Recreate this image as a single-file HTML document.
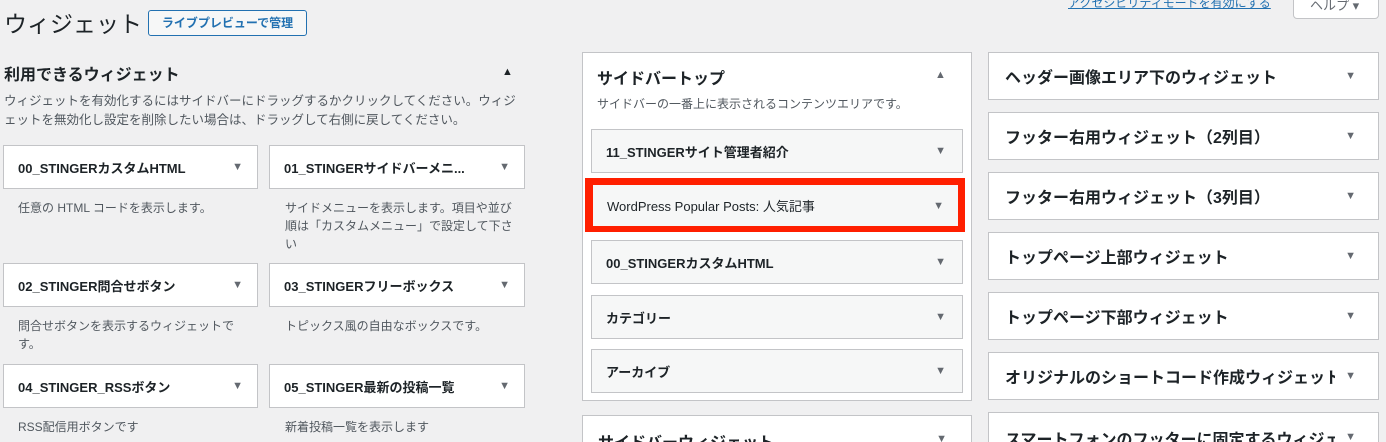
<!DOCTYPE html>
<html style="width:1386px;height:442px;overflow:hidden"><head><meta charset="utf-8"><style>
*{box-sizing:border-box;margin:0;padding:0}
body{width:1386px;height:442px;overflow:hidden;background:#f0f0f1;font-family:"Liberation Sans","Noto Sans CJK JP",sans-serif;color:#1d2327;position:relative}
.a{position:absolute}
.w{position:absolute;background:#fff;border:1px solid #c3c4c7;font-weight:bold;font-size:13px;padding:0 0 0 14px;display:flex;align-items:center;white-space:nowrap;overflow:hidden}
.w .t{position:absolute;right:14px;top:50%;transform:translateY(-50%);font-size:11px;color:#646970}
.d{position:absolute;font-size:12px;color:#50575e;line-height:18px}
.s{position:absolute;background:#f6f7f7;border:1px solid #c3c4c7;font-size:13px;font-weight:bold;padding-left:14px;display:flex;align-items:center;white-space:nowrap}
.s .t{position:absolute;right:16px;top:50%;transform:translateY(-50%);font-size:11px;color:#646970}
.r{position:absolute;left:988px;width:391px;height:48px;background:#fff;border:1px solid #c3c4c7;font-size:16px;font-weight:bold;padding-left:16px;display:flex;align-items:center;white-space:nowrap;overflow:hidden}
.r span.n{display:block;width:330px;overflow:hidden}
.r .t{position:absolute;right:22px;top:50%;transform:translateY(-50%);font-size:11px;color:#646970;background:#fff;padding-left:4px}
</style></head><body>
<div class="a" style="left:4px;top:5px;font-size:23px;color:#1d2327">ウィジェット</div>
<div class="a" style="left:148px;top:10px;width:159px;height:26px;border:1px solid #2271b1;border-radius:3px;color:#2271b1;font-size:12px;font-weight:bold;text-align:center;line-height:24px;background:#f6f7f7">ライブプレビューで管理</div>
<div class="a" style="left:1068px;top:-6px;font-size:12px;color:#2271b1;text-decoration:underline">アクセシビリティモードを有効にする</div>
<div class="a" style="left:1293px;top:-8px;width:86px;height:27px;background:#fff;border:1px solid #c3c4c7;border-radius:0 0 4px 4px;font-size:13px;color:#646970;padding-left:16px;line-height:26px">ヘルプ ▾</div>

<div class="a" style="left:4px;top:61px;font-size:16px;font-weight:bold">利用できるウィジェット</div>
<div class="a" style="left:502px;top:66px;font-size:11px">▲</div>
<div class="d" style="left:4px;top:92px;width:520px;line-height:19px;font-size:12.5px">ウィジェットを有効化するにはサイドバーにドラッグするかクリックしてください。ウィジェットを無効化し設定を削除したい場合は、ドラッグして右側に戻してください。</div>

<div class="w" style="left:3px;top:145px;width:255px;height:44px">00_STINGERカスタムHTML<span class="t">▼</span></div>
<div class="w" style="left:269px;top:145px;width:256px;height:44px">01_STINGERサイドバーメニ...<span class="t">▼</span></div>
<div class="d" style="left:18px;top:199px">任意の HTML コードを表示します。</div>
<div class="d" style="left:285px;top:199px;width:230px">サイドメニューを表示します。項目や並び順は「カスタムメニュー」で設定して下さい</div>

<div class="w" style="left:3px;top:263px;width:255px;height:44px">02_STINGER問合せボタン<span class="t">▼</span></div>
<div class="w" style="left:269px;top:263px;width:256px;height:44px">03_STINGERフリーボックス<span class="t">▼</span></div>
<div class="d" style="left:18px;top:317px;width:225px">問合せボタンを表示するウィジェットです。</div>
<div class="d" style="left:285px;top:317px">トピックス風の自由なボックスです。</div>

<div class="w" style="left:3px;top:364px;width:255px;height:44px">04_STINGER_RSSボタン<span class="t">▼</span></div>
<div class="w" style="left:269px;top:364px;width:256px;height:44px">05_STINGER最新の投稿一覧<span class="t">▼</span></div>
<div class="d" style="left:18px;top:418px">RSS配信用ボタンです</div>
<div class="d" style="left:285px;top:418px">新着投稿一覧を表示します</div>

<div class="a" style="left:582px;top:52px;width:390px;height:349px;background:#fff;border:1px solid #c3c4c7"></div>
<div class="a" style="left:597px;top:65px;font-size:16px;font-weight:bold">サイドバートップ</div>
<div class="a" style="left:935px;top:69px;font-size:11px;color:#646970">▲</div>
<div class="d" style="left:597px;top:95px">サイドバーの一番上に表示されるコンテンツエリアです。</div>
<div class="s" style="left:591px;top:129px;width:372px;height:44px">11_STINGERサイト管理者紹介<span class="t">▼</span></div>
<div class="a" style="left:585px;top:178px;width:380px;height:54px;background:#ff1f00"></div>
<div class="s" style="left:593px;top:185px;width:365px;height:41px;border:none;font-weight:normal;font-size:13px;color:#1d2327">WordPress Popular Posts: 人気記事<span class="t" style="right:14px">▼</span></div>
<div class="s" style="left:591px;top:240px;width:372px;height:44px">00_STINGERカスタムHTML<span class="t">▼</span></div>
<div class="s" style="left:591px;top:295px;width:372px;height:44px">カテゴリー<span class="t">▼</span></div>
<div class="s" style="left:591px;top:349px;width:372px;height:44px">アーカイブ<span class="t">▼</span></div>
<div class="a" style="left:582px;top:415px;width:390px;height:40px;background:#fff;border:1px solid #c3c4c7;font-size:16px;font-weight:bold;padding:13px 0 0 15px">サイドバーウィジェット<span style="position:absolute;right:24px;top:17px;font-size:11px;color:#646970">▼</span></div>

<div class="r" style="top:52px"><span class="n">ヘッダー画像エリア下のウィジェット</span><span class="t">▼</span></div>
<div class="r" style="top:112px"><span class="n">フッター右用ウィジェット（2列目）</span><span class="t">▼</span></div>
<div class="r" style="top:172px"><span class="n">フッター右用ウィジェット（3列目）</span><span class="t">▼</span></div>
<div class="r" style="top:232px"><span class="n">トップページ上部ウィジェット</span><span class="t">▼</span></div>
<div class="r" style="top:292px"><span class="n">トップページ下部ウィジェット</span><span class="t">▼</span></div>
<div class="r" style="top:352px"><span class="n">オリジナルのショートコード作成ウィジェット</span><span class="t">▼</span></div>
<div class="r" style="top:412px;height:48px;align-items:flex-start;padding-top:13px"><span class="n">スマートフォンのフッターに固定するウィジェット</span><span class="t" style="top:24px">▼</span></div>
</body></html>
